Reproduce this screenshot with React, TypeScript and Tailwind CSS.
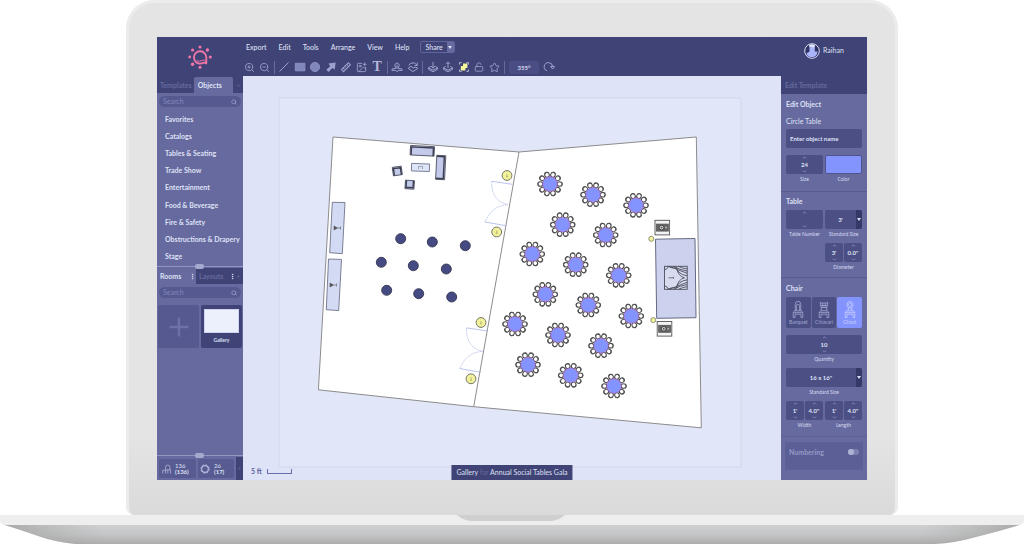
import React from "react";
import {
  Search,
  ZoomIn,
  ZoomOut,
  Star,
  ImagePlus,
  LockOpen,
  Plus,
  MoreVertical,
  ChevronUp,
  ChevronDown,
} from "lucide-react";

const categories = [
  "Favorites",
  "Catalogs",
  "Tables & Seating",
  "Trade Show",
  "Entertainment",
  "Food & Beverage",
  "Fire & Safety",
  "Obstructions & Drapery",
  "Stage",
];

const roundTables = [
  [550, 184], [593, 194.7], [636, 205.3], [562.7, 224.7], [605.7, 235],
  [532.3, 254], [575.7, 264.7], [618.7, 275.3], [545.3, 294.3], [588.3, 305],
  [631.3, 316], [515, 324], [558, 335], [601, 345.7], [528, 364.7],
  [570.7, 375.3], [614, 386],
];

const cocktailTables = [
  [400.7, 238.7], [432.3, 242], [465.3, 245.7], [381.3, 262.3], [413.3, 265.7],
  [446.3, 269], [386.7, 290.3], [418.7, 293.7], [451.7, 297],
];

const lights = [[507, 175.5], [496.7, 232], [481, 322.5], [471, 378.8]];

const seatAngles = [18, 54, 90, 126, 162, 198, 234, 270, 306, 342];

function Logo() {
  return (
    <svg viewBox="0 0 24 24" className="size-6" fill="none" stroke="#f277a8" aria-label="Social Tables" role="img">
      <path d="M18.300 18.400 Q16.800 17.400 15.400 17.700 A6.200 6.200 0 1 1 18.300 12 Z" strokeWidth="1.8" strokeLinejoin="round" />
      <path d="M8.500 15.800 Q11.500 17 14.800 15.200 Q16.500 14.400 18 16.600" strokeWidth="0.9" />
      <g fill="#f277a8" stroke="none">
        <circle cx="12" cy="1.9" r="1.5" />
        <circle cx="12" cy="22.2" r="1.5" />
        <circle cx="1.7" cy="12" r="1.4" />
        <circle cx="22.3" cy="12" r="1.6" />
        <circle cx="4.6" cy="5" r="1.6" />
        <circle cx="19.4" cy="5" r="1.7" />
        <circle cx="4.6" cy="19.2" r="1.7" />
      </g>
    </svg>
  );
}

function ToolButton({ label, children }: { label: string; children: React.ReactNode }) {
  return (
    <button aria-label={label} className="flex size-3 items-center justify-center text-[#9da1cd]">
      {children}
    </button>
  );
}

function Glyph({ children }: { children: React.ReactNode }) {
  return (
    <svg viewBox="0 0 12 12" className="size-3" fill="none" stroke="currentColor" strokeWidth="0.9">
      {children}
    </svg>
  );
}

function Divider() {
  return <span className="h-[13px] w-px bg-[#666a9e]" />;
}

function Toolbar() {
  return (
    <div className="flex h-[14px] items-center gap-1">
      <div className="flex w-[262px] items-center justify-between">
        <ToolButton label="Zoom in"><ZoomIn size={11} strokeWidth={1.8} /></ToolButton>
        <ToolButton label="Zoom out"><ZoomOut size={11} strokeWidth={1.8} /></ToolButton>
        <Divider />
        <ToolButton label="Line"><Glyph><path d="M1.5 10.5 L10.5 1.5" strokeWidth="1" /></Glyph></ToolButton>
        <ToolButton label="Rectangle"><Glyph><path d="M1.300 2.300h9.600v7.500H1.300z" fill="#8186bb" stroke="#8f93c4" /></Glyph></ToolButton>
        <ToolButton label="Circle"><Glyph><circle cx="6" cy="6" r="4.6" fill="#8186bb" stroke="#8f93c4" /></Glyph></ToolButton>
        <ToolButton label="Arrow">
          <Glyph><path d="M1.300 8.800 L5.200 5.200 L3.400 2.400 L10.600 1.400 L9.800 8.400 L7.300 6.900 L3.600 10.900 Z" fill="currentColor" stroke="none" /></Glyph>
        </ToolButton>
        <ToolButton label="Measure">
          <Glyph><path d="M1.5 8.600 L8.400 1.700 L10.400 3.700 L3.500 10.600 Z M3.200 7 l1.200 1.200 M5 5.200 l1 1 M6.800 3.400 l1.200 1.200" strokeWidth="1.1" /></Glyph>
        </ToolButton>
        <ToolButton label="Image"><ImagePlus size={11} strokeWidth={2} /></ToolButton>
        <ToolButton label="Text">
          <span className="font-['Liberation_Serif',serif] text-[14px] leading-3 font-bold text-[#b4b7dc]">T</span>
        </ToolButton>
        <Divider />
        <ToolButton label="Stamp">
          <Glyph><path d="M4.600 6 a2.200 2.200 0 1 1 2.800 0 M6 3.800 V8 M4.600 6 V7.400 L1 8 V9.400 H4.500 L6 10.600 L7.500 9.400 H11 V8 L7.400 7.400 V6" strokeWidth="1" /></Glyph>
        </ToolButton>
        <ToolButton label="Flip">
          <Glyph><path d="M1.800 4.600 Q2.600 1.800 6 1.800 Q8.500 1.800 9.800 4 M10.300 1.600 V4.400 H7.600 M4 5.200 L1.200 7.400 L6 10.600 L10.800 7.400 L8.800 6 M4 5.200 L6 7 L8.800 6" strokeWidth="1" /></Glyph>
        </ToolButton>
        <Divider />
        <ToolButton label="Bring forward">
          <Glyph><path d="M6 1 V7 M4 5 L6 7.200 L8 5 M3.600 5.400 L1.400 6.800 V8.200 L6 10.800 L10.600 8.200 V6.800 L8.400 5.400 M1.400 6.800 L6 9.200 L10.600 6.800" strokeWidth="1" /></Glyph>
        </ToolButton>
        <ToolButton label="Send backward">
          <Glyph><path d="M6 7 V1 M4.200 3 L6 1 L7.800 3 M3.600 5.400 L1.400 6.800 V8.200 L6 10.800 L10.600 8.200 V6.800 L8.400 5.400 M1.400 6.800 L6 9.200 L10.600 6.800" strokeWidth="1" /></Glyph>
        </ToolButton>
        <ToolButton label="Group">
          <Glyph>
            <path d="M1.600 3.500 V1.600 H3.500 M8.500 1.600 H10.400 V3.500 M10.400 8.500 V10.400 H8.500 M3.500 10.400 H1.600 V8.500" stroke="#c8cbe9" />
            <path d="M5 2.400 H9.400 V7 H7.400 V9.400 H2.800 V5 H5 Z" fill="#f5f59c" stroke="none" />
          </Glyph>
        </ToolButton>
        <ToolButton label="Unlock"><LockOpen size={10} strokeWidth={2} /></ToolButton>
        <ToolButton label="Favorite"><Star size={11} strokeWidth={2} /></ToolButton>
        <Divider />
      </div>
      <input
        aria-label="Rotation"
        defaultValue="355°"
        className="h-[13px] w-[30px] rounded-xs bg-[#4a4d83] text-center text-[6px] font-bold text-[#d5d7f0]"
      />
      <ToolButton label="Rotate">
        <Glyph><path d="M4 9.800 A4.200 4.200 0 1 1 9.600 6 M7.600 5.400 H11.600 L9.600 8 Z" strokeWidth="1" /></Glyph>
      </ToolButton>
    </div>
  );
}

function Header() {
  return (
    <header className="flex h-[39px] bg-[#404375]">
      <div className="flex w-[86px] shrink-0 items-center justify-center"><Logo /></div>
      <div className="flex flex-1 flex-col gap-[7px] pt-1">
        <nav className="flex h-3 items-center gap-3 pl-[3px] text-[7px] font-medium text-[#dfe1f5]">
          {["Export", "Edit", "Tools", "Arrange", "View", "Help"].map((item) => (
            <button key={item}>{item}</button>
          ))}
          <div className="-ml-px flex h-3 overflow-hidden rounded-xs border border-[#62669c]">
            <button className="px-1 leading-[10px]">Share</button>
            <button aria-label="Share options" className="flex w-[7px] items-center justify-center bg-[#666aa0]">
              <svg viewBox="0 0 4 3" className="h-[3px] w-1" fill="currentColor"><path d="M0 0h4L2 3z" /></svg>
            </button>
          </div>
        </nav>
        <Toolbar />
      </div>
      <div className="flex h-[27px] w-[63px] items-center gap-[3px] text-[7px] text-[#dfe1f5]">
        <svg viewBox="0 0 16 16" className="size-4">
          <circle cx="8" cy="8" r="7.3" fill="#2f3263" stroke="#d9dcf5" strokeWidth="1" />
          <path d="M5 1.800 Q8 .8 11 2 L10.500 5 L5.500 4.600 Z" fill="#dfe3fb" />
          <path d="M5.500 4.400 H10.800 V8.500 H13.500 Q13 13 9.500 14 H6 Q3 13 2.400 10.400 L5.500 8.500 Z" fill="#a9b4fb" />
        </svg>
        Raihan
      </div>
    </header>
  );
}

function SearchField({ label }: { label: string }) {
  return (
    <label className="mx-[2px] mt-[3px] flex h-[11px] shrink-0 items-center rounded-full bg-[#555990] pr-1 pl-1">
      <input
        aria-label={label}
        placeholder="Search"
        className="h-[11px] w-full min-w-0 bg-transparent text-[7px] leading-[11px] outline-none placeholder:text-[#8387b8]"
      />
      <Search size={6} strokeWidth={3} className="shrink-0 text-[#9a9ecb]" />
    </label>
  );
}

function Splitter() {
  return (
    <div className="relative flex h-[3px] shrink-0 items-center justify-center">
      <span className="h-px w-full bg-[#9195c0]" />
      <span className="absolute -top-px left-[38px] h-[5px] w-[9px] rounded-xs bg-[#a6a9cf]" />
    </div>
  );
}

function LeftPanel() {
  return (
    <aside className="flex w-[86px] shrink-0 flex-col bg-[#666a9f] text-[#dfe1f5]">
      <div className="flex h-[17px] items-end justify-between bg-[#404375] text-[7px] font-bold">
        <button className="h-4 pl-[3px] text-[#666a9f]">Templates</button>
        <button className="h-4 w-[39px] rounded-t-xs bg-[#666a9f] pr-2">Objects</button>
        <button aria-label="Add panel" className="flex h-4 w-[7px] items-center text-[#666a9f]"><Plus size={5} /></button>
      </div>
      <SearchField label="Search objects" />
      <ul className="mt-1 flex h-[154px] flex-col justify-around pl-2 text-[7px] leading-[9px] font-bold whitespace-nowrap">
        {categories.map((name) => (
          <li key={name}><a href={"#" + name}>{name}</a></li>
        ))}
      </ul>
      <Splitter />
      <div className="flex h-4 items-stretch text-[7px] font-bold">
        <button className="flex w-[39px] items-center justify-between pl-[3px]">
          Rooms <MoreVertical size={7} strokeWidth={3} />
        </button>
        <button className="flex flex-1 items-center justify-between bg-[#404375] pl-[3px] text-[#666a9f]">
          Layouts <MoreVertical size={7} strokeWidth={3} className="text-[#dfe1f5]" />
        </button>
        <button aria-label="Add layout" className="flex w-[7px] items-center bg-[#404375] text-[#666a9f]"><Plus size={5} /></button>
      </div>
      <SearchField label="Search rooms" />
      <div className="mt-[7px] grid grid-cols-2 gap-[2px] px-px">
        <button aria-label="Add room" className="flex h-[43px] items-center justify-center rounded-xs bg-[#555990] text-[#6d71a8]">
          <svg viewBox="0 0 20 20" className="size-5" stroke="currentColor" strokeWidth="2.4"><path d="M10 .5v19M.5 10h19" /></svg>
        </button>
        <button className="flex h-[43px] flex-col items-center gap-1 rounded-xs bg-[#404375] px-[3px] pt-1 text-[5px] leading-[7px] font-bold">
          <span className="h-6 w-full border border-[#cfd3ee] bg-[#eceffc]" />
          Gallery
        </button>
      </div>
      <div className="flex-1" />
      <Splitter />
      <div className="flex h-[23px] shrink-0 text-[6px] leading-[6px]">
        <div className="flex flex-1 gap-[2px] p-[2px]">
          <div className="flex flex-1 items-center gap-1 rounded-xs bg-[#575b91] pl-[3px]">
            <svg viewBox="0 0 10 12" className="h-3 w-[9px] shrink-0" fill="none" stroke="#b0b3d8" strokeWidth="0.9">
              <path d="M4 11V7h5.500v4M4 7V4a2.400 2.400 0 0 1 4.800 0V7M.8 11V7.500H4M6.500 7v4" />
            </svg>
            <p>136<br /><b>(136)</b></p>
          </div>
          <div className="flex flex-1 items-center gap-1 rounded-xs bg-[#575b91] pl-[2px]">
            <svg viewBox="0 0 12 12" className="size-[10px] shrink-0" fill="none" stroke="#b4b7dc">
              <circle cx="6" cy="6" r="4" strokeWidth="1.400" />
              <circle cx="6" cy="6" r="5" strokeWidth="1.200" strokeDasharray="2.200 1.727" />
            </svg>
            <p>26<br /><b>(17)</b></p>
          </div>
        </div>
        <button aria-label="Add counter" className="flex w-[7px] items-center justify-center bg-[#404375] text-[#666a9f]"><Plus size={5} /></button>
      </div>
    </aside>
  );
}

function RoundTable({ x, y }: { x: number; y: number }) {
  return (
    <g transform={`translate(${x} ${y})`}>
      {seatAngles.map((a) => (
        <g key={a} transform={`rotate(${a})`}>
          <ellipse cy="-9.700" rx="2.300" ry="2.500" fill="#fff" stroke="#505050" strokeWidth="1.100" />
          <path d="M-2 -11 Q0 -13.400 2 -11" fill="none" stroke="#505050" strokeWidth="0.9" />
        </g>
      ))}
      <circle r="7.300" fill="#8494ff" stroke="#b45cc8" strokeWidth="0.6" />
    </g>
  );
}

function Sofa({ x, y, w, h, angle }: { x: number; y: number; w: number; h: number; angle: number }) {
  return (
    <g transform={`translate(${x} ${y}) rotate(${angle})`} stroke="#3c3e52">
      <rect x={-w / 2} y={-h / 2} width={w} height={h} fill="#c3c9e8" strokeWidth="0.8" />
      <path d={`M${-w / 2 + 1} ${h / 2} V${-h / 2 + 1.4} H${w / 2 - 1} V${h / 2}`} fill="none" strokeWidth="1.400" />
    </g>
  );
}

function Doors({ x, y }: { x: number; y: number }) {
  return (
    <g transform={`translate(${x} ${y})`} fill="none" stroke="#a9b5e4" strokeWidth="0.8">
      <path d="M-16 -23.400 L4.600 -20.400 M-22.700 17.300 L-1.700 21" />
      <path d="M-16 -23.400 Q-16.500 -4 0 0 M-22.700 17.300 Q-16 1 0 0" strokeDasharray="1.500 0.800" />
    </g>
  );
}

function Speaker({ x, y }: { x: number; y: number }) {
  return (
    <g transform={`translate(${x} ${y})`} fill="none" stroke="#555">
      <rect width="14.600" height="14.600" fill="#f4f4f4" strokeWidth="0.9" />
      <rect x="1.500" y="3.800" width="11.800" height="7" fill="#666" strokeWidth="0.8" />
      <circle cx="6.500" cy="7.300" r="2.400" fill="#ccc" stroke="#333" strokeWidth="0.8" />
      <circle cx="6.500" cy="7.300" r="0.7" fill="#444" strokeWidth="0.4" />
      <path d="M10 6.300h2v2h-2z" fill="#ddd" strokeWidth="0.5" />
    </g>
  );
}

function FloorPlan() {
  return (
    <svg viewBox="243 76 538 404" className="block h-auto w-full" role="img" aria-label="Gallery floor plan">
      <rect x="279" y="98" width="462" height="369" fill="#e1e6f9" stroke="#d2d8ee" strokeWidth="1" />
      <path d="M333 137 L519 152 L696.300 137 L701.300 427.800 L473.700 406.700 L318.400 389.800 Z M519 152 L473.700 406.700" fill="#fff" stroke="#8c8c8c" strokeWidth="1" />
      <g fill="#d3daf3" stroke="#70748a" strokeWidth="0.9">
        <path d="M332.300 202.300 L345 202.500 L342.300 253.700 L329.700 252.700 Z" />
        <path d="M328.500 259 L341.500 259.400 L338.700 310.600 L326.300 309.700 Z" />
        <rect x="411.500" y="163.700" width="18" height="7.500" transform="rotate(2 420 167)" fill="#dfe5f8" />
        <path d="M418.500 169 v-2.500 h4 v2.500" fill="none" strokeWidth="0.6" />
      </g>
      <g fill="#555" stroke="#555" strokeWidth="0.6">
        <path d="M334 226 L337.500 228 L334 230 Z M337.500 228 H340.500 M340.500 226.500 v3" />
        <path d="M330 283 L333.500 285 L330 287 Z M333.500 285 H336.500 M336.500 283.500 v3" />
      </g>
      <Sofa x={422.3} y={150.8} w={24} h={9.5} angle={3} />
      <Sofa x={440.7} y={167.5} w={24} h={9} angle={93} />
      <Sofa x={397.3} y={171} w={9} h={8.5} angle={-8} />
      <Sofa x={409.7} y={184.7} w={9} h={8.5} angle={184} />
      <Doors x={507.7} y={204.7} />
      <Doors x={482.5} y={351.3} />
      {lights.map(([x, y]) => (
        <g key={x}>
          <circle cx={x} cy={y} r="4.900" fill="#f1f29b" stroke="#74756a" strokeWidth="1" />
          <path d={`M${x} ${y - 1.5} v3 M${x - 1} ${y + 1.2} h2`} stroke="#a0a060" strokeWidth="0.7" />
        </g>
      ))}
      {cocktailTables.map(([x, y]) => (
        <circle key={x} cx={x} cy={y} r="5" fill="#454a82" stroke="#34374f" strokeWidth="0.9" />
      ))}
      {roundTables.map(([x, y]) => (
        <RoundTable key={x} x={x} y={y} />
      ))}
      <path d="M655.500 239.200 L695 238.500 L696 317.700 L656.700 318.300 Z" fill="#ccd2ee" stroke="#666a80" strokeWidth="1" />
      <g transform="translate(664.500 266.300)" fill="none" stroke="#4c4f5c" strokeWidth="0.9">
        <rect width="22.700" height="23" fill="#d6dbf0" />
        <path d="M3 0 Q8 2.500 12 1.500 Q13.500 8 22.700 9.500 M5 0 Q12 3 22.700 7 M9 0 Q15 3.500 22.700 4.800 M14 0 Q18 2.200 22.700 2.600" />
        <path d="M3 23 Q8 20.500 12 21.500 Q13.500 15 22.700 13.500 M5 23 Q12 20 22.700 16 M9 23 Q15 19.500 22.700 18.200 M14 23 Q18 20.800 22.700 20.400" />
        <path d="M12 1.500 Q13.500 10 20 11.500 Q13.500 13 12 21.500 M0 3.500 Q3 3 4 0 M0 19.500 Q3 20 4 23" />
        <path d="M4 11.500h5 M9 10.500v2" strokeWidth="0.7" />
      </g>
      <Speaker x={655} y={220.3} />
      <Speaker x={657.2} y={321.5} />
      <circle cx="651.300" cy="238.800" r="2.500" fill="#f4f5a0" stroke="#77785c" strokeWidth="0.8" />
      <circle cx="653.300" cy="320.100" r="2.500" fill="#f4f5a0" stroke="#77785c" strokeWidth="0.8" />
    </svg>
  );
}

function Canvas() {
  return (
    <main className="relative min-w-0 flex-1 bg-[#dee3f7]">
      <FloorPlan />
      <div className="absolute bottom-1 left-2 flex items-center gap-[5px] text-[7px] leading-[10px] font-bold text-[#5b60a0]">
        5 ft
        <span className="h-[5px] w-[25px] border border-t-0 border-[#6a6fae]" />
      </div>
      <p className="absolute bottom-0 left-1/2 h-[15px] -translate-x-1/2 bg-[#404375] px-[5px] text-[7px] leading-[15px] whitespace-nowrap text-[#dfe1f5]">
        Gallery <span className="text-[#666a9f]">for</span> Annual Social Tables Gala
      </p>
    </main>
  );
}

function Stepper({ id, value }: { id: string; value: string }) {
  return (
    <div className="flex h-[19px] min-w-0 flex-1 flex-col items-center justify-between rounded-xs bg-[#4b4f84] text-[#8f93c2]">
      <button aria-label="Increase"><ChevronUp size={5} strokeWidth={4} /></button>
      <input id={id} defaultValue={value} className="h-[8px] w-full min-w-0 bg-transparent text-center text-[6px] leading-[8px] font-bold text-[#dfe1f5]" />
      <button aria-label="Decrease"><ChevronDown size={5} strokeWidth={4} /></button>
    </div>
  );
}

function SizeSelect({ id, value }: { id: string; value: string }) {
  return (
    <div className="flex h-[19px] items-center overflow-hidden rounded-xs bg-[#4b4f84]">
      <select id={id} defaultValue={value} className="h-full min-w-0 flex-1 appearance-none bg-transparent text-[6px] font-bold text-[#dfe1f5] [text-align-last:center]">
        <option>{value}</option>
      </select>
      <span className="flex h-full w-[6px] items-center justify-center bg-[#363967]">
        <svg viewBox="0 0 4 3" className="h-[3px] w-1" fill="currentColor"><path d="M0 0h4L2 3z" /></svg>
      </span>
    </div>
  );
}

function Caption({ htmlFor, children }: { htmlFor: string; children: React.ReactNode }) {
  return (
    <label htmlFor={htmlFor} className="mt-px block text-center text-[5px] leading-2 font-medium whitespace-nowrap text-[#d0d2ec]">
      {children}
    </label>
  );
}

function Chair({ name }: { name: string }) {
  return (
    <svg viewBox="0 0 14 18" className="h-[18px] w-[14px]" fill="none" stroke="currentColor" strokeWidth="0.8">
      <path d="M2.200 17.500V12.600H11.800V17.500H10V14.200H4V17.500ZM2.600 12.600L3.400 10.800H10.600L11.400 12.600" />
      {name === "Banquet" && <path d="M4.300 10.800 V4.500 L5 2 Q7 .6 9 2 L9.700 4.500 V10.800 M5.400 10.800 V5 Q7 3.400 8.600 5 V10.800" />}
      {name === "Chiavari" && <path d="M4.600 10.800 L3.200 2 M9.400 10.800 L10.800 2 M3.400 3 H10.600 M3.800 5.500 H10.200 M4.200 7.500 H9.800 M5.800 3 V7.500 M8.200 3 V7.500" />}
      {name === "Ghost" && <path d="M5 10.800 L5.500 8 Q3.600 6.500 4 4 Q4.600 1.500 7 1.500 Q9.400 1.500 10 4 Q10.400 6.500 8.500 8 L9 10.800 M5.500 8 H8.500 M7 3.200 a1.700 1.700 0 1 0 .1 0" />}
    </svg>
  );
}

function RightPanel() {
  return (
    <aside className="flex w-[86px] shrink-0 flex-col bg-[#666a9f] text-[#dfe1f5]">
      <h2 className="h-[18px] bg-[#404375] pl-1 text-[7px] leading-[18px] font-bold text-[#666a9f]">Edit Template</h2>
      <section className="border-b border-[#575b90] px-[5px] pt-[5px] pb-2">
        <h2 className="text-[7px] leading-[11px] font-bold">Edit Object</h2>
        <label htmlFor="object-name" className="mt-[6px] block text-[7px] leading-[10px]">Circle Table</label>
        <input id="object-name" defaultValue="Enter object name" className="mt-[3px] block h-[19px] w-full rounded-xs bg-[#4b4f84] px-1 text-[6px] font-bold" />
        <div className="mt-[7px] grid grid-cols-2 gap-[2px]">
          <div>
            <div className="flex"><Stepper id="size" value="24" /></div>
            <Caption htmlFor="size">Size</Caption>
          </div>
          <div>
            <button id="color" aria-label="Color" className="block h-[19px] w-full rounded-xs border border-[#50548c] bg-[#8494ff]" />
            <Caption htmlFor="color">Color</Caption>
          </div>
        </div>
      </section>
      <section className="border-b border-[#575b90] px-[5px] pt-1 pb-[6px]">
        <h2 className="text-[7px] leading-[11px] font-bold">Table</h2>
        <div className="mt-[3px] grid grid-cols-2 gap-x-[2px] gap-y-[5px]">
          <div>
            <div className="flex"><Stepper id="table-number" value="" /></div>
            <Caption htmlFor="table-number">Table Number</Caption>
          </div>
          <div>
            <SizeSelect id="table-size" value="3'" />
            <Caption htmlFor="table-size">Standard Size</Caption>
          </div>
          <div className="col-start-2">
            <div className="flex gap-px">
              <Stepper id="diameter" value="3'" />
              <Stepper id="diameter-inches" value={'0.0"'} />
            </div>
            <Caption htmlFor="diameter">Diameter</Caption>
          </div>
        </div>
      </section>
      <section className="border-b border-[#5e6297] px-[5px] pt-[5px] pb-[7px]">
        <h2 className="text-[7px] leading-[11px] font-bold">Chair</h2>
        <div className="mt-[3px] grid grid-cols-3 gap-px text-[5px] leading-[7px]">
          <button className="flex h-[31px] flex-col items-center justify-center gap-px rounded-xs bg-[#4b4f84] text-[#a3a7d0]"><Chair name="Banquet" />Banquet</button>
          <button className="flex h-[31px] flex-col items-center justify-center gap-px rounded-xs bg-[#4b4f84] text-[#a3a7d0]"><Chair name="Chiavari" />Chiavari</button>
          <button className="flex h-[31px] flex-col items-center justify-center gap-px rounded-xs bg-[#8494ff] text-[#c6ceff]"><Chair name="Ghost" />Ghost</button>
        </div>
        <div className="mt-[7px]">
          <div className="flex"><Stepper id="quantity" value="10" /></div>
          <Caption htmlFor="quantity">Quantity</Caption>
        </div>
        <div className="mt-[5px]">
          <SizeSelect id="chair-size" value={'16 x 16"'} />
          <Caption htmlFor="chair-size">Standard Size</Caption>
        </div>
        <div className="mt-[5px] grid grid-cols-2 gap-[2px]">
          <div>
            <div className="flex gap-px">
              <Stepper id="width" value="1'" />
              <Stepper id="width-inches" value={'4.0"'} />
            </div>
            <Caption htmlFor="width">Width</Caption>
          </div>
          <div>
            <div className="flex gap-px">
              <Stepper id="length" value="1'" />
              <Stepper id="length-inches" value={'4.0"'} />
            </div>
            <Caption htmlFor="length">Length</Caption>
          </div>
        </div>
      </section>
      <label className="mx-1 mt-[5px] flex h-7 items-start justify-between rounded-xs bg-[#5b5f95] px-1 pt-[5px] text-[7px] leading-[10px] font-bold text-[#9599c6]">
        Numbering
        <span className="mt-[2px] flex h-[6px] w-[11px] items-center rounded-full bg-[#7c80b0]">
          <input type="checkbox" className="size-[6px] appearance-none rounded-full bg-[#b0b3d6]" />
        </span>
      </label>
    </aside>
  );
}

function LaptopBase() {
  return (
    <svg viewBox="0 0 1024 29" preserveAspectRatio="none" className="block h-[29px] w-full shrink-0">
      <defs>
        <linearGradient id="deck" x1="0" y1="0" x2="0" y2="1">
          <stop offset="0" stopColor="#d0d1d2" />
          <stop offset="0.5" stopColor="#c4c5c6" />
          <stop offset="1" stopColor="#adadad" />
        </linearGradient>
        <linearGradient id="edge" x1="0" y1="0" x2="1" y2="0">
          <stop offset="0" stopColor="#999" stopOpacity="0.7" />
          <stop offset="0.1" stopColor="#aaa" stopOpacity="0" />
          <stop offset="0.9" stopColor="#aaa" stopOpacity="0" />
          <stop offset="1" stopColor="#999" stopOpacity="0.7" />
        </linearGradient>
      </defs>
      <path d="M3 9.500 H1021 Q1000 16 976 22 Q955 28 935 29 H75 Q55 27 38 21 Q18 14 3 9.500 Z" fill="url(#deck)" />
      <path d="M3 9.500 H1021 Q1000 16 976 22 Q955 28 935 29 H75 Q55 27 38 21 Q18 14 3 9.500 Z" fill="url(#edge)" />
      <path d="M0 0 H1024 V6 Q1023 10 1018 10 H6 Q1 10 0 6 Z" fill="#eeeeee" />
      <path d="M457 0 H565 Q558 6 549 6 H473 Q464 6 457 0 Z" fill="#cfcfcf" />
    </svg>
  );
}

export default function App() {
  return (
    <div className="flex min-h-screen flex-col bg-white font-['Lato','Noto_Sans',sans-serif]">
      <div className="mx-[126px] flex-1 rounded-t-[28px] rounded-b-lg border-[3px] border-b-0 border-[#ececec] bg-linear-to-b from-[#e4e4e4] from-85% to-[#dadada] px-7 pt-[34px] pb-[35px]">
        <div className="bg-[#404375]">
          <Header />
          <div className="flex">
            <LeftPanel />
            <Canvas />
            <RightPanel />
          </div>
        </div>
      </div>
      <LaptopBase />
    </div>
  );
}
